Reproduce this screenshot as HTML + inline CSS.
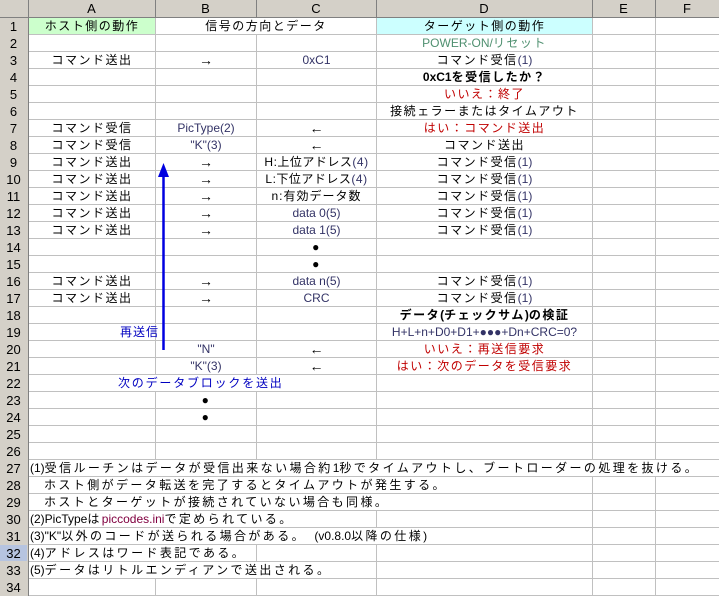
<!DOCTYPE html>
<html><head><meta charset="utf-8"><style>
body{margin:0;width:719px;height:596px;overflow:hidden;background:#fff;font-family:"Liberation Sans","Noto Sans CJK JP",sans-serif;font-size:12px;color:#000}
#g{position:absolute;left:0;top:0;width:719px;height:596px;
background:
linear-gradient(#d4d0c8,#d4d0c8) 0 0/719px 18px no-repeat,
linear-gradient(#d4d0c8,#d4d0c8) 0 0/28px 596px no-repeat,
repeating-linear-gradient(to bottom,transparent 0 16px,#c0c0c0 16px 17px) 0 18px/719px 578px no-repeat;}
.v{position:absolute;top:0;height:596px;width:1px;background:#c0c0c0}
.vh{position:absolute;top:0;height:18px;width:1px;background:#808080}
.c{position:absolute;height:16px;line-height:17px;text-align:center;white-space:nowrap;letter-spacing:1.5px}
.h{position:absolute;top:0;height:18px;line-height:18px;text-align:center;font-size:13px;color:#000}
.r{position:absolute;left:0;width:27px;height:16px;line-height:17px;text-align:center;font-size:13px;background:#d4d0c8}
.t{position:absolute;height:16px;line-height:17px;white-space:nowrap;background:#fff;letter-spacing:2.4px;padding-right:2px}
.l{letter-spacing:0}
.ar{font-size:14px;letter-spacing:0}
.p{color:#333366}.red{color:#c00000}.b{font-weight:bold}
</style></head><body>
<div id="g"></div>
<div class="v" style="left:28px;background:#808080"></div>
<div class="v" style="left:155px"></div><div class="v" style="left:256px"></div><div class="v" style="left:376px"></div><div class="v" style="left:592px"></div><div class="v" style="left:655px"></div>
<div style="position:absolute;left:0;top:17px;width:719px;height:1px;background:#808080"></div>
<div class="h" style="left:28px;width:127px">A</div><div class="h" style="left:155px;width:101px">B</div><div class="h" style="left:256px;width:120px">C</div><div class="h" style="left:376px;width:216px">D</div><div class="h" style="left:592px;width:63px">E</div><div class="h" style="left:655px;width:64px">F</div>
<div class="vh" style="left:155px"></div><div class="vh" style="left:256px"></div><div class="vh" style="left:376px"></div><div class="vh" style="left:592px"></div><div class="vh" style="left:655px"></div>

<div class="r" style="top:18px">1</div><div class="r" style="top:35px">2</div><div class="r" style="top:52px">3</div><div class="r" style="top:69px">4</div><div class="r" style="top:86px">5</div><div class="r" style="top:103px">6</div><div class="r" style="top:120px">7</div><div class="r" style="top:137px">8</div><div class="r" style="top:154px">9</div><div class="r" style="top:171px">10</div><div class="r" style="top:188px">11</div><div class="r" style="top:205px">12</div><div class="r" style="top:222px">13</div><div class="r" style="top:239px">14</div><div class="r" style="top:256px">15</div><div class="r" style="top:273px">16</div><div class="r" style="top:290px">17</div><div class="r" style="top:307px">18</div><div class="r" style="top:324px">19</div><div class="r" style="top:341px">20</div><div class="r" style="top:358px">21</div><div class="r" style="top:375px">22</div><div class="r" style="top:392px">23</div><div class="r" style="top:409px">24</div><div class="r" style="top:426px">25</div><div class="r" style="top:443px">26</div><div class="r" style="top:460px">27</div><div class="r" style="top:477px">28</div><div class="r" style="top:494px">29</div><div class="r" style="top:511px">30</div><div class="r" style="top:528px">31</div><div class="r" style="top:545px;background:#b6c4e0">32</div><div class="r" style="top:562px">33</div><div class="r" style="top:579px">34</div>

<div class="c" style="left:29px;width:126px;top:18px;background:#ccffcc">ホスト側の動作</div>
<div class="c" style="left:156px;width:220px;top:18px;background:#fff">信号の方向とデータ</div>
<div class="c" style="left:377px;width:215px;top:18px;background:#ccffff">ターゲット側の動作</div>
<div class="c" style="left:377px;width:215px;top:35px;color:#4f9070"><span class="l">POWER-ON/</span>リセット</div>
<div class="c" style="left:377px;width:215px;top:52px">コマンド受信<span class="p l">(1)</span></div>
<div class="c b" style="left:377px;width:215px;top:69px"><span class="l">0xC1</span>を受信したか？</div>
<div class="c red" style="left:377px;width:215px;top:86px">いいえ：終了</div>
<div class="c" style="left:377px;width:215px;top:103px">接続ェラーまたはタイムアウト</div>
<div class="c red" style="left:377px;width:215px;top:120px">はい：コマンド送出</div>
<div class="c" style="left:377px;width:215px;top:137px">コマンド送出</div>
<div class="c" style="left:377px;width:215px;top:154px">コマンド受信<span class="p l">(1)</span></div>
<div class="c" style="left:377px;width:215px;top:171px">コマンド受信<span class="p l">(1)</span></div>
<div class="c" style="left:377px;width:215px;top:188px">コマンド受信<span class="p l">(1)</span></div>
<div class="c" style="left:377px;width:215px;top:205px">コマンド受信<span class="p l">(1)</span></div>
<div class="c" style="left:377px;width:215px;top:222px">コマンド受信<span class="p l">(1)</span></div>
<div class="c" style="left:377px;width:215px;top:273px">コマンド受信<span class="p l">(1)</span></div>
<div class="c" style="left:377px;width:215px;top:290px">コマンド受信<span class="p l">(1)</span></div>
<div class="c b" style="left:377px;width:215px;top:307px">データ<span class="l">(</span>チェックサム<span class="l">)</span>の検証</div>
<div class="c p" style="left:377px;width:215px;top:324px;letter-spacing:0">H+L+n+D0+D1+●●●+Dn+CRC=0?</div>
<div class="c red" style="left:377px;width:215px;top:341px">いいえ：再送信要求</div>
<div class="c red" style="left:377px;width:215px;top:358px">はい：次のデータを受信要求</div>
<div class="c" style="left:29px;width:126px;top:52px">コマンド送出</div>
<div class="c" style="left:29px;width:126px;top:120px">コマンド受信</div>
<div class="c" style="left:29px;width:126px;top:137px">コマンド受信</div>
<div class="c" style="left:29px;width:126px;top:154px">コマンド送出</div>
<div class="c" style="left:29px;width:126px;top:171px">コマンド送出</div>
<div class="c" style="left:29px;width:126px;top:188px">コマンド送出</div>
<div class="c" style="left:29px;width:126px;top:205px">コマンド送出</div>
<div class="c" style="left:29px;width:126px;top:222px">コマンド送出</div>
<div class="c" style="left:29px;width:126px;top:273px">コマンド送出</div>
<div class="c" style="left:29px;width:126px;top:290px">コマンド送出</div>
<div class="c" style="left:120px;width:40px;top:324px;color:#0000c0;text-align:left;letter-spacing:1px">再送信</div>
<div class="c ar" style="left:156px;width:100px;top:52px">→</div>
<div class="c p" style="left:156px;width:100px;top:120px;letter-spacing:0">PicType(2)</div>
<div class="c p" style="left:156px;width:100px;top:137px;letter-spacing:0">"K"(3)</div>
<div class="c ar" style="left:156px;width:100px;top:154px">→</div>
<div class="c ar" style="left:156px;width:100px;top:171px">→</div>
<div class="c ar" style="left:156px;width:100px;top:188px">→</div>
<div class="c ar" style="left:156px;width:100px;top:205px">→</div>
<div class="c ar" style="left:156px;width:100px;top:222px">→</div>
<div class="c ar" style="left:156px;width:100px;top:273px">→</div>
<div class="c ar" style="left:156px;width:100px;top:290px">→</div>
<div class="c p" style="left:156px;width:100px;top:341px;letter-spacing:0">"N"</div>
<div class="c p" style="left:156px;width:100px;top:358px;letter-spacing:0">"K"(3)</div>
<div class="c" style="left:156px;width:100px;top:392px">●</div>
<div class="c" style="left:156px;width:100px;top:409px">●</div>
<div class="c p" style="left:257px;width:119px;top:52px;letter-spacing:0">0xC1</div>
<div class="c ar" style="left:257px;width:119px;top:120px">←</div>
<div class="c ar" style="left:257px;width:119px;top:137px">←</div>
<div class="c" style="left:257px;width:119px;top:154px;letter-spacing:0.5px">H:上位アドレス<span class="p">(4)</span></div>
<div class="c" style="left:257px;width:119px;top:171px;letter-spacing:0.5px">L:下位アドレス<span class="p">(4)</span></div>
<div class="c" style="left:257px;width:119px;top:188px;letter-spacing:1px">n:有効データ数</div>
<div class="c p" style="left:257px;width:119px;top:205px;letter-spacing:0">data 0(5)</div>
<div class="c p" style="left:257px;width:119px;top:222px;letter-spacing:0">data 1(5)</div>
<div class="c" style="left:257px;width:119px;top:239px">●</div>
<div class="c" style="left:257px;width:119px;top:256px">●</div>
<div class="c p" style="left:257px;width:119px;top:273px;letter-spacing:0">data n(5)</div>
<div class="c p" style="left:257px;width:119px;top:290px;letter-spacing:0">CRC</div>
<div class="c ar" style="left:257px;width:119px;top:341px">←</div>
<div class="c ar" style="left:257px;width:119px;top:358px">←</div>
<div class="t" style="left:118px;top:375px;color:#0000c0;letter-spacing:1.8px">次のデータブロックを送出</div>
<svg style="position:absolute;left:0;top:0" width="719" height="596"><line x1="163.5" y1="350" x2="163.5" y2="172" stroke="#0000e0" stroke-width="2.5"/><polygon points="163.5,163 158,177 169,177" fill="#0000e0"/></svg>
<div class="t" style="left:30px;top:460px"><span class="l">(1)</span>受信ルーチンはデータが受信出来ない場合約<span class="l">1</span>秒でタイムアウトし、ブートローダーの処理を抜ける。</div>
<div class="t" style="left:44px;top:477px">ホスト側がデータ転送を完了するとタイムアウトが発生する。</div>
<div class="t" style="left:44px;top:494px">ホストとターゲットが接続されていない場合も同様。</div>
<div class="t" style="left:30px;top:511px"><span class="l">(2)PicType</span>は<span class="l" style="color:#800040">piccodes.ini</span>で定められている。</div>
<div class="t" style="left:30px;top:528px"><span class="l">(3)"K"</span>以外のコードが送られる場合がある。　<span class="l">(v0.8.0</span>以降の仕様<span class="l">)</span></div>
<div class="t" style="left:30px;top:545px"><span class="l">(4)</span>アドレスはワード表記である。</div>
<div class="t" style="left:30px;top:562px"><span class="l">(5)</span>データはリトルエンディアンで送出される。</div>
</body></html>
